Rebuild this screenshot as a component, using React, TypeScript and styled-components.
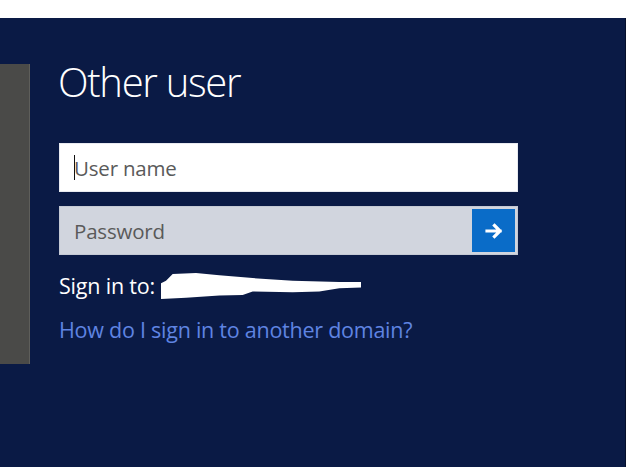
import React from "react";
import styled, { createGlobalStyle } from "styled-components";

const Global = createGlobalStyle`
  html, body { margin: 0; padding: 0; background: #ffffff; }
  body { font-family: "Open Sans", "Noto Sans", sans-serif; }
`;

const Screen = styled.div`
  margin-top: 18px;
  width: 626px;
  height: 449px;
  background: #0a1a45;
  display: flex;
  align-items: flex-start;
  box-sizing: border-box;
  border-right: 1px solid #06102c;
`;

const Tile = styled.div`
  margin-top: 46px;
  width: 30px;
  height: 300px;
  background: #4a4a48;
  border-right: 1px solid #5e5e5a;
  box-sizing: border-box;
  flex: none;
`;

const Panel = styled.div`
  margin-left: 29px;
  width: 459px;
  display: flex;
  flex-direction: column;
`;

const Title = styled.h1`
  margin: 40px 0 0 -1px;
  font-size: 40px;
  line-height: 48px;
  font-weight: 300;
  color: #ffffff;
  letter-spacing: -1.3px;
`;

const Field = styled.div<{ $filled?: boolean }>`
  height: 49px;
  box-sizing: border-box;
  display: flex;
  align-items: stretch;
  background: ${(p) => (p.$filled ? "#ffffff" : "#d1d5de")};
  border: 1px solid ${(p) => (p.$filled ? "#e8eaf0" : "#c4c9d4")};
`;

const Placeholder = styled.div`
  flex: 1;
  display: flex;
  align-items: center;
  padding-left: 14px;
  font-size: 20.5px;
  color: #5a5a5a;
  letter-spacing: -0.2px;
`;

const Caret = styled.span`
  display: inline-block;
  width: 1px;
  height: 25px;
  background: #111;
  margin-right: -1px;
`;

const GoButton = styled.button`
  width: 43px;
  margin: 2px;
  border: none;
  padding: 0;
  background: #0a6cc8;
  display: flex;
  align-items: center;
  justify-content: center;
`;

const Stack = styled.div`
  margin-top: 37px;
  display: flex;
  flex-direction: column;
  gap: 14px;
`;

const SignIn = styled.div`
  margin-top: 16px;
  display: flex;
  align-items: center;
  font-size: 21.5px;
  line-height: 30px;
  color: #ffffff;
  letter-spacing: -0.2px;
`;

const Redact = styled.svg`
  margin-left: 6px;
  flex: none;
`;

const Link = styled.a`
  margin-top: 14px;
  font-size: 21.5px;
  line-height: 30px;
  color: #5f84e2;
  text-decoration: none;
  letter-spacing: -0.25px;
`;

export default function App() {
  return (
    <>
      <Global />
      <Screen>
        <Tile />
        <Panel>
          <Title>Other user</Title>
          <Stack>
            <Field $filled>
              <Placeholder>
                <Caret />
                User name
              </Placeholder>
            </Field>
            <Field>
              <Placeholder>Password</Placeholder>
              <GoButton aria-label="Sign in">
                <svg width="18" height="16" viewBox="0 0 18 16">
                  <path
                    d="M2 8 H15 M9.5 2.5 L15 8 L9.5 13.5"
                    stroke="#ffffff"
                    strokeWidth="3.2"
                    fill="none"
                    strokeLinecap="square"
                  />
                </svg>
              </GoButton>
            </Field>
          </Stack>
          <SignIn>
            Sign in to:
            <Redact width="200" height="27" viewBox="25 15 600 80" preserveAspectRatio="none">
              <polygon
                fill="#ffffff"
                points="40,38 60,18 130,15 200,22 300,30 420,38 560,42 625,42 625,58 560,60 500,70 420,72 300,70 270,80 200,82 100,88 25,92 25,45"
              />
            </Redact>
          </SignIn>
          <Link href="#">How do I sign in to another domain?</Link>
        </Panel>
      </Screen>
    </>
  );
}
